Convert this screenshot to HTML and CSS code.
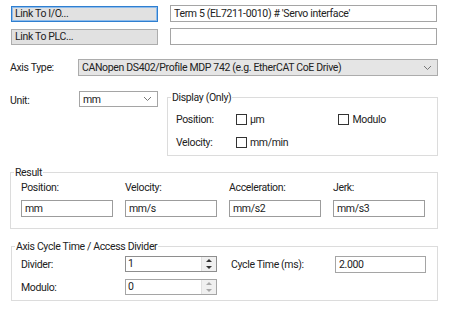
FILE: index.html
```html
<!DOCTYPE html>
<html lang="en">
<head>
    <meta charset="UTF-8">
    <title>Axis Settings</title>
    <link rel="stylesheet" href="styles.css">
</head>
<body>

    <div class="panel">
        <div class="link-row">
            <button class="btn focused">Link To I/O...</button>
            <input class="text-field" type="text" value="Term 5 (EL7211-0010) # 'Servo interface'">
        </div>
        <div class="link-row second">
            <button class="btn">Link To PLC...</button>
            <input class="text-field" type="text" value="">
        </div>

        <div class="axis-row">
            <span class="axis-label">Axis Type:</span>
            <div class="combo grey">
                <span>CANopen DS402/Profile MDP 742 (e.g. EtherCAT CoE Drive)</span>
                <svg width="9" height="6" viewBox="0 0 9 6"><path d="M1 1 L4.5 4.5 L8 1" fill="none" stroke="#777" stroke-width="1"/></svg>
            </div>
        </div>

        <div class="unit-row">
            <span class="unit-label">Unit:</span>
            <div class="combo unit">
                <span>mm</span>
                <svg width="9" height="6" viewBox="0 0 9 6"><path d="M1 1 L4.5 4.5 L8 1" fill="none" stroke="#777" stroke-width="1"/></svg>
            </div>
            <fieldset class="group display">
                <legend>Display (Only)</legend>
                <div class="check-row">
                    <span class="check-label">Position:</span>
                    <span class="box"></span><span class="check-text">µm</span>
                    <span class="box modulo"></span><span class="check-text">Modulo</span>
                </div>
                <div class="check-row">
                    <span class="check-label">Velocity:</span>
                    <span class="box"></span><span class="check-text">mm/min</span>
                </div>
            </fieldset>
        </div>

        <fieldset class="group result">
            <legend>Result</legend>
            <div class="result-grid">
                <div class="result-col">
                    <span>Position:</span>
                    <input class="text-field" type="text" value="mm">
                </div>
                <div class="result-col">
                    <span>Velocity:</span>
                    <input class="text-field" type="text" value="mm/s">
                </div>
                <div class="result-col">
                    <span>Acceleration:</span>
                    <input class="text-field" type="text" value="mm/s2">
                </div>
                <div class="result-col">
                    <span>Jerk:</span>
                    <input class="text-field" type="text" value="mm/s3">
                </div>
            </div>
        </fieldset>

        <fieldset class="group cycle">
            <legend>Axis Cycle Time / Access Divider</legend>
            <div class="cycle-body">
                <div class="cycle-row">
                    <span class="cycle-label">Divider:</span>
                    <div class="spinner">
                        <span class="spin-value">1</span>
                        <span class="spin-buttons">
                            <span class="arrow up"></span>
                            <span class="arrow down"></span>
                        </span>
                    </div>
                    <span class="time-label">Cycle Time (ms):</span>
                    <input class="text-field time" type="text" value="2.000">
                </div>
                <div class="cycle-row">
                    <span class="cycle-label">Modulo:</span>
                    <div class="spinner disabled">
                        <span class="spin-value">0</span>
                        <span class="spin-buttons">
                            <span class="arrow up"></span>
                            <span class="arrow down"></span>
                        </span>
                    </div>
                </div>
            </div>
        </fieldset>
    </div>

</body>
</html>
```

FILE: styles.css
```css
body {
    margin: 0;
    background-color: #FFFFFF;
    color: #222222;
    font-family: Roboto, 'Liberation Sans', Arial, sans-serif;
    font-size: 10.5px;
    letter-spacing: -0.35px;
}
.panel {
    width: 428px;
    padding: 5px 0 0 10px;
}
.link-row {
    display: flex;
    align-items: center;
    height: 17px;
}
.link-row.second {
    margin-top: 6px;
}
.btn {
    width: 147px;
    height: 16px;
    margin-left: 1px;
    padding: 0 0 0 3px;
    text-align: left;
    font: inherit;
    letter-spacing: inherit;
    color: #222222;
    background-color: #E1E1E1;
    border: 1px solid #ADADAD;
}
.btn.focused {
    border-color: #2F7FD0;
    box-shadow: inset 0 0 0 1px #8FBCEB;
}
.text-field {
    box-sizing: border-box;
    height: 17px;
    padding: 0 3px;
    font: inherit;
    letter-spacing: inherit;
    color: #222222;
    background-color: #FFFFFF;
    border: 1px solid #A5A5A5;
    outline: none;
}
.link-row .text-field {
    width: 267px;
    margin-left: 12px;
}
.axis-row {
    display: flex;
    align-items: center;
    margin-top: 14px;
}
.axis-label {
    width: 68px;
}
.combo {
    box-sizing: border-box;
    display: flex;
    align-items: center;
    justify-content: space-between;
    height: 17px;
    padding: 0 5px 0 3px;
    border: 1px solid #ACACAC;
}
.combo.grey {
    width: 360px;
    background-color: #E5E5E5;
}
.combo.unit {
    width: 79px;
    height: 16px;
    background-color: #FFFFFF;
    border-color: #A5A5A5;
}
.unit-row {
    display: flex;
    align-items: flex-start;
    margin-top: 15px;
}
.unit-label {
    width: 69px;
    line-height: 16px;
    margin-top: 2px;
}
.group {
    margin: 0;
    padding: 0;
    border: 1px solid #DCDCDC;
}
.group legend {
    margin-left: 3px;
    padding: 0 1px;
}
.display {
    width: 271px;
    height: 65px;
    margin-left: 9px;
    box-sizing: border-box;
}
.display .check-row:first-of-type {
    margin-top: 9px;
}
.check-row {
    display: flex;
    align-items: center;
    height: 12px;
    padding-left: 8px;
}
.check-row + .check-row {
    margin-top: 11px;
}
.check-label {
    width: 60px;
}
.box {
    box-sizing: border-box;
    width: 11px;
    height: 11px;
    border: 1px solid #333;
    background-color: #FFFFFF;
}
.check-text {
    margin-left: 3px;
}
.box.modulo {
    margin-left: 74px;
}
.result {
    margin-top: 10px;
    width: 428px;
    box-sizing: border-box;
    height: 63px;
}
.result-grid {
    display: flex;
    gap: 13px;
    padding: 2px 0 0 10px;
}
.result-col {
    display: flex;
    flex-direction: column;
    width: 91px;
}
.result-col span {
    height: 13px;
    margin-bottom: 6px;
}
.result-col .text-field {
    width: 92px;
    border-color: #9C9C9C;
}
.cycle {
    margin-top: 11px;
    margin-left: 1px;
    width: 427px;
    box-sizing: border-box;
    height: 61px;
}
.cycle-body {
    padding: 3px 0 0 9px;
}
.cycle-row {
    display: flex;
    align-items: center;
    height: 16px;
}
.cycle-row + .cycle-row {
    margin-top: 7px;
}
.cycle-label {
    width: 104px;
}
.spinner {
    box-sizing: border-box;
    display: flex;
    width: 92px;
    height: 16px;
    border: 1px solid #8E8E8E;
}
.spin-value {
    flex: 1;
    padding-left: 2px;
    line-height: 14px;
}
.spin-buttons {
    display: flex;
    flex-direction: column;
    width: 14px;
    border-left: 1px solid #E0E0E0;
}
.arrow {
    flex: 1;
    display: flex;
    align-items: center;
    justify-content: center;
    background-color: #F0F0F0;
}
.arrow::before {
    content: "";
    border-left: 3px solid transparent;
    border-right: 3px solid transparent;
}
.arrow.up::before {
    border-bottom: 3px solid #333;
}
.arrow.down::before {
    border-top: 3px solid #333;
}
.spinner.disabled {
    border-color: #A5A5A5;
}
.spinner.disabled .arrow.up::before {
    border-bottom-color: #A8A8A8;
}
.spinner.disabled .arrow.down::before {
    border-top-color: #A8A8A8;
}
.time-label {
    width: 104px;
    margin-left: 14px;
}
.text-field.time {
    width: 91px;
}
```
